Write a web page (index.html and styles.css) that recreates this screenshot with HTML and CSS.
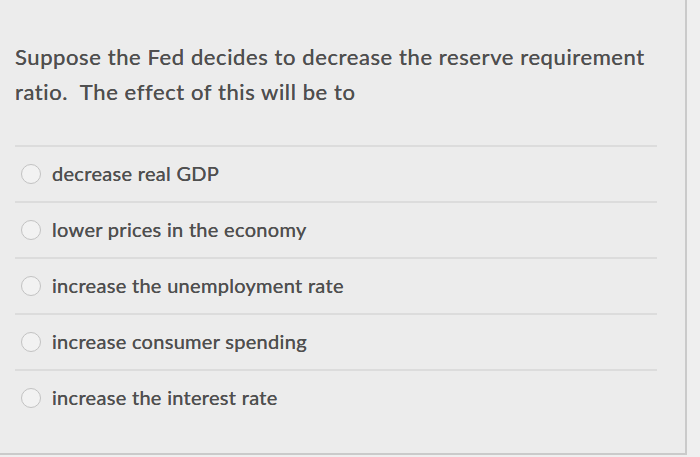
FILE: index.html
```html
<!DOCTYPE html>
<html lang="en">
<head>
<meta charset="utf-8">
<link rel="stylesheet" href="styles.css">
</head>
<body>
<div class="card">
  <p class="question">Suppose the Fed decides to decrease the reserve requirement ratio.&nbsp; The effect of this will be to</p>
  <ul class="options">
    <li class="option"><span class="radio"></span><span class="label">decrease real GDP</span></li>
    <li class="option"><span class="radio"></span><span class="label">lower prices in the economy</span></li>
    <li class="option"><span class="radio"></span><span class="label">increase the unemployment rate</span></li>
    <li class="option"><span class="radio"></span><span class="label">increase consumer spending</span></li>
    <li class="option"><span class="radio"></span><span class="label">increase the interest rate</span></li>
  </ul>
</div>
</body>
</html>
```
FILE: styles.css
```css
html, body {
  margin: 0;
  padding: 0;
  background: #efefef;
  height: 100%;
}
body {
  font-family: Lato, "Open Sans", sans-serif;
  color: #555;
}
.card {
  box-sizing: border-box;
  width: 687px;
  height: 455px;
  background: #ececec;
  border-right: 2px solid #cacaca;
  border-bottom: 2px solid #cacaca;
  padding: 39px 0 0 15px;
}
.question {
  margin: 0;
  width: 642px;
  font-size: 22px;
  letter-spacing: 0.6px;
  line-height: 35px;
  color: #4f4f4f;
  text-shadow: 0 0 0.6px #4f4f4f;
}
.options {
  list-style: none;
  margin: 36px 0 0;
  padding: 0;
  width: 642px;
}
.option {
  display: flex;
  align-items: center;
  height: 54px;
  border-top: 2px solid #dcdcdc;
  font-size: 20px;
  letter-spacing: 0.3px;
  color: #4f4f4f;
  text-shadow: 0 0 0.6px #4f4f4f;
}
.radio {
  box-sizing: border-box;
  width: 20px;
  height: 20px;
  border: 1.5px solid #c2c2c2;
  border-radius: 50%;
  background: #f2f2f2;
  margin: 0 11px 0 6px;
  flex: none;
}
.label {
  margin-top: -2px;
}
```
